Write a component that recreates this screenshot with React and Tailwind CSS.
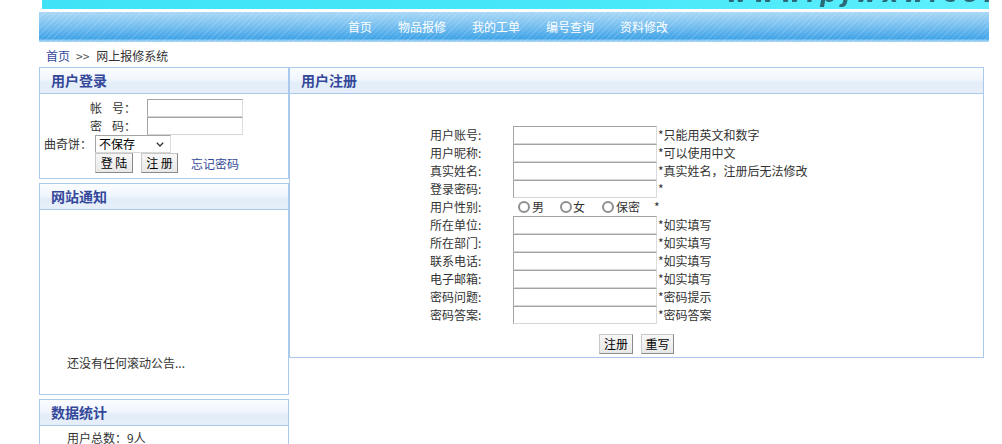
import React from "react";

const BORDER = "border-[#abc9ec]";

function BoxHeader({ title }) {
  return (
    <div className="h-[26px] border-b border-[#abc9ec] bg-[linear-gradient(180deg,#fbfdff_0%,#f1f6fd_45%,#e3edf9_60%,#e6eff9_100%)] pl-[11px]">
      <span className="text-[14px] font-bold leading-[25px] text-[#34489a]">{title}</span>
    </div>
  );
}

function Field({ w }) {
  return (
    <input
      className={`block h-[18px] ${w} border border-t-[#a3a3a3] border-l-[#a3a3a3] border-r-[#dcdcdc] border-b-[#d6d6d6] bg-white outline-none`}
    />
  );
}

function Btn({ children, w }) {
  return (
    <button className={`flex h-[20px] ${w} items-center justify-center whitespace-pre border border-t-[#c8c8c8] border-l-[#c8c8c8] border-r-[#8a8a8a] border-b-[#8a8a8a] bg-[linear-gradient(180deg,#f7f7f7,#e8e8e8)] text-[12px] leading-[12px] text-black`}>
      {children}
    </button>
  );
}

function Radio() {
  return <span className="inline-block h-[12px] w-[12px] rounded-full border-2 border-[#8f8f8f] bg-white" />;
}

const rows = [
  ["用户账号:", "*只能用英文和数字"],
  ["用户昵称:", "*可以使用中文"],
  ["真实姓名:", "*真实姓名，注册后无法修改"],
  ["登录密码:", "*"],
  ["用户性别:", null],
  ["所在单位:", "*如实填写"],
  ["所在部门:", "*如实填写"],
  ["联系电话:", "*如实填写"],
  ["电子邮箱:", "*如实填写"],
  ["密码问题:", "*密码提示"],
  ["密码答案:", "*密码答案"],
];

export default function App() {
  return (
    <div className="min-h-[444px] w-[1002px] overflow-hidden bg-white font-['Noto_Sans_CJK_SC',sans-serif] text-[12px] text-[#333]">
      <div className="ml-[39px] w-[950px]">
        {/* banner */}
        <div className="ml-[3px] h-[9px] overflow-hidden bg-[linear-gradient(90deg,#3fe2f6_0%,#48e8f9_60%,#5eeffc_100%)]">
          <div className="ml-[684px] mt-[-22px] whitespace-nowrap font-['DejaVu_Sans',sans-serif] text-[24px] font-bold italic leading-[32px] tracking-[5px] text-[#2a6a78] blur-[0.6px]">
            www.pjwxw.com
          </div>
        </div>
        <div className="h-[3px]" />
        {/* nav */}
        <div className="flex h-[30px] items-center gap-[26px] bg-[repeating-linear-gradient(135deg,rgba(255,255,255,0.13)_0px,rgba(255,255,255,0.13)_1px,transparent_1px,transparent_4px),linear-gradient(180deg,#a9d8f6_0%,#79c0f0_45%,#45a6e8_85%,#3fa3e6_90%,#86c6f1_93%,#a6d4f5_100%)] pl-[309px] text-[12px] leading-[14px] text-white">
          <span>首页</span>
          <span>物品报修</span>
          <span>我的工单</span>
          <span>编号查询</span>
          <span>资料修改</span>
        </div>
        {/* breadcrumb */}
        <div className="flex h-[25px] items-center pl-[7px] pt-[3px] leading-[14px]">
          <span className="text-[#34489a]">首页</span>
          <span className="ml-[6px] text-[#555]">&gt;&gt;</span>
          <span className="ml-[7px]">网上报修系统</span>
        </div>
        {/* columns */}
        <div className="flex items-start">
          {/* left */}
          <div className="w-[250px]">
            <div className={`border ${BORDER}`}>
              <BoxHeader title="用户登录" />
              <div className="h-[84px] pt-[5px]">
                <div className="flex h-[18px] items-center">
                  <span className="ml-[50px] w-[57px] leading-[14px]">
                    帐<span className="ml-[10px]">号</span>：
                  </span>
                  <Field w="w-[96px]" />
                </div>
                <div className="flex h-[18px] items-center">
                  <span className="ml-[50px] w-[57px] leading-[14px]">
                    密<span className="ml-[10px]">码</span>：
                  </span>
                  <Field w="w-[96px]" />
                </div>
                <div className="flex h-[18px] items-center">
                  <span className="ml-[4px] w-[51px] leading-[14px]">曲奇饼：</span>
                  <div className="flex h-[18px] w-[76px] items-center justify-between border border-t-[#a3a3a3] border-l-[#a3a3a3] border-r-[#dcdcdc] border-b-[#d6d6d6] bg-white pl-[3px] pr-[6px] leading-[14px] text-black">
                    <span>不保存</span>
                    <svg width="8" height="5" viewBox="0 0 8 5">
                      <path d="M0.8 0.8 L4 4 L7.2 0.8" fill="none" stroke="#333" strokeWidth="1.3" />
                    </svg>
                  </div>
                </div>
                <div className="flex h-[20px] items-center">
                  <div className="ml-[55px]">
                    <Btn w="w-[38px]">登 陆</Btn>
                  </div>
                  <div className="ml-[8px]">
                    <Btn w="w-[37px]">注 册</Btn>
                  </div>
                  <span className="ml-[13px] pt-[2px] leading-[14px] text-[#34489a]">忘记密码</span>
                </div>
              </div>
            </div>
            <div className={`mt-[4px] border ${BORDER}`}>
              <BoxHeader title="网站通知" />
              <div className="h-[184px] pl-[27px] pt-[146px] leading-[14px]">还没有任何滚动公告...</div>
            </div>
            <div className={`mt-[4px] border ${BORDER}`}>
              <BoxHeader title="数据统计" />
              <div className="h-[80px] pl-[27px] pt-[5px] leading-[14px]">用户总数：9人</div>
            </div>
          </div>
          {/* right */}
          <div className={`w-[695px] border ${BORDER}`}>
            <BoxHeader title="用户注册" />
            <div className="h-[263px] pt-[32px]">
              <div className="ml-[140px]">
                {rows.map(([label, hint]) => (
                  <div key={label} className="flex h-[18px] items-center leading-[14px]">
                    <span className="w-[83px]">{label}</span>
                    {hint === null ? (
                      <div className="flex items-center">
                        <span className="ml-[5px] flex">
                          <Radio />
                        </span>
                        <span className="ml-[2px]">男</span>
                        <span className="ml-[16px] flex">
                          <Radio />
                        </span>
                        <span className="ml-[1px]">女</span>
                        <span className="ml-[17px] flex">
                          <Radio />
                        </span>
                        <span className="ml-[2px]">保密</span>
                        <span className="ml-[14px]">*</span>
                      </div>
                    ) : (
                      <>
                        <Field w="w-[144px]" />
                        <span className="ml-[1px]">{hint}</span>
                      </>
                    )}
                  </div>
                ))}
              </div>
              <div className="mt-[10px] flex justify-center gap-[8px]">
                <Btn w="w-[34px] h-[19px]">注册</Btn>
                <Btn w="w-[33px] h-[19px]">重写</Btn>
              </div>
            </div>
          </div>
        </div>
      </div>
    </div>
  );
}
